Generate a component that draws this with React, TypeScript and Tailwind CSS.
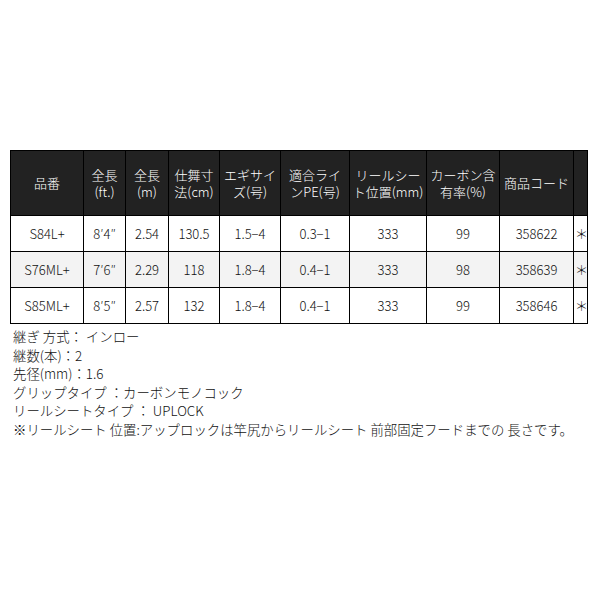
const columns = [73, 42, 43, 51, 61, 69, 77, 73, 74, 14]

const headers: React.ReactNode[] = [
  "品番",
  <>全長<br />(ft.)</>,
  <>全長<br />(m)</>,
  <>仕舞寸<br />法(cm)</>,
  <>エギサイ<br />ズ(号)</>,
  <>適合ライ<br />ンPE(号)</>,
  <>リールシー<br />ト位置(mm)</>,
  <>カーボン含<br />有率(%)</>,
  "商品コード",
  "",
]

const rows = [
  ["S84L+", "8′4″", "2.54", "130.5", "1.5−4", "0.3−1", "333", "99", "358622", "＊"],
  ["S76ML+", "7′6″", "2.29", "118", "1.8−4", "0.4−1", "333", "98", "358639", "＊"],
  ["S85ML+", "8′5″", "2.57", "132", "1.8−4", "0.4−1", "333", "99", "358646", "＊"],
]

const notes = [
  "継ぎ 方式： インロー",
  "継数(本)：2",
  "先径(mm)：1.6",
  "グリップタイプ ：カーボンモノコック",
  "リールシートタイプ ： UPLOCK",
  "※リールシート 位置:アップロックは竿尻からリールシート 前部固定フードまでの 長さです。",
]

export default function App() {
  return (
    <div
      className="w-[600px] h-[600px] bg-white pt-[150px] pl-[10px] text-[13px] font-light text-[#111]"
      style={{ fontFamily: '"Noto Sans CJK JP", "Noto Sans", sans-serif' }}
    >
      <table className="table-fixed border-collapse border border-black w-[577px]">
        <colgroup>
          {columns.map((w, i) => (
            <col key={i} style={{ width: w }} />
          ))}
        </colgroup>
        <thead>
          <tr className="h-[65px] bg-[#222]">
            {headers.map((h, i) => (
              <th
                key={i}
                className="border border-black p-0 text-center font-light text-white leading-[17.5px] whitespace-nowrap"
              >
                {h}
              </th>
            ))}
          </tr>
        </thead>
        <tbody>
          {rows.map((row, r) => (
            <tr key={r} className={r === 1 ? "h-[36px] bg-[#f3f3f3]" : "h-[36px] bg-white"}>
              {row.map((cell, i) => (
                <td
                  key={i}
                  className={
                    i === 9
                      ? "border border-black p-0 pl-[1px] text-left whitespace-nowrap"
                      : "border border-black p-0 text-center whitespace-nowrap"
                  }
                >
                  {cell}
                </td>
              ))}
            </tr>
          ))}
        </tbody>
      </table>
      <div className="mt-[3px] pl-[3px] text-[13.4px] leading-[18.6px]">
        {notes.map((n, i) => (
          <div key={i} className="whitespace-nowrap">
            {n}
          </div>
        ))}
      </div>
    </div>
  )
}
